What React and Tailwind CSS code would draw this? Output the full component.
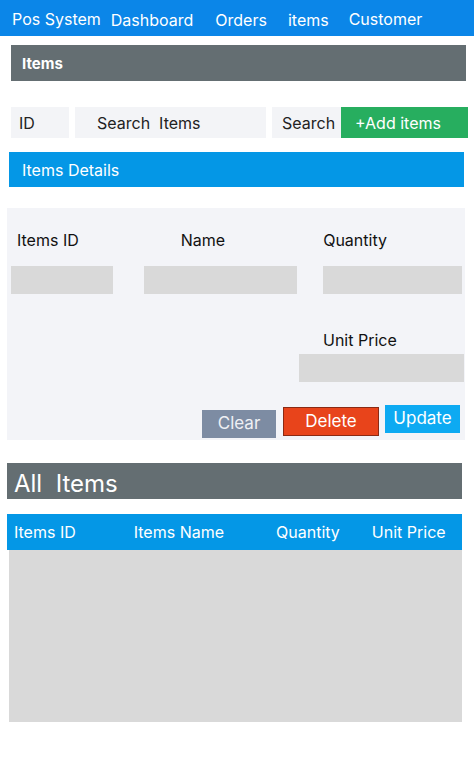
const font = { fontFamily: "Inter, 'Noto Sans', sans-serif" };

const Field = ({ className }) => (
  <div className={"h-[28px] bg-[#d9d9d9] " + className}></div>
);

const App = () => {
  return (
    <div className="w-[474px] h-[757px] bg-white text-black" style={font}>
      {/* nav */}
      <div className="h-[36px] bg-[#0b86e8] flex items-center pt-[3px] text-white text-[16px]">
        <span className="ml-[12px] -mt-[2px]">Pos System</span>
        <span className="ml-[10px]">Dashboard</span>
        <span className="ml-[22px]">Orders</span>
        <span className="ml-[21px]">items</span>
        <span className="ml-[20px] -mt-[2px]">Customer</span>
      </div>

      {/* items title */}
      <div className="mt-[9px] mx-[11px] w-[455px] h-[36px] bg-[#646e72] flex items-center pt-[3px] px-[11px] text-white font-bold text-[15px]">
        Items
      </div>

      {/* search row */}
      <div className="mt-[26px] ml-[11px] flex h-[31px] text-[16px] text-[#222]">
        <div className="w-[58px] bg-[#f3f4f7] flex items-center pl-[8px]">ID</div>
        <div className="ml-[6px] w-[191px] bg-[#f3f4f7] flex items-center pl-[22px]">Search&nbsp; Items</div>
        <div className="ml-[6px] w-[69px] bg-[#f3f4f7] flex items-center pl-[10px]">Search</div>
        <div className="w-[127px] bg-[#27ae5f] flex items-center pl-[14px] text-white">+Add items</div>
      </div>

      {/* items details bar */}
      <div className="mt-[14px] ml-[9px] w-[455px] h-[35px] bg-[#0497e6] flex items-center pl-[13px] text-white text-[16px]">
        Items Details
      </div>

      {/* form */}
      <div className="mt-[21px] ml-[7px] w-[458px] h-[232px] bg-[#f3f4f8] flex flex-col text-[16px] text-[#111]">
        <div className="flex mt-[22px] h-[20px] items-center">
          <span className="ml-[10px]">Items ID</span>
          <span className="ml-[102px]">Name</span>
          <span className="ml-[98px]">Quantity</span>
        </div>
        <div className="flex mt-[16px]">
          <Field className="ml-[4px] w-[102px]" />
          <Field className="ml-[31px] w-[153px]" />
          <Field className="ml-[26px] w-[139px]" />
        </div>
        <div className="mt-[36px] ml-[316px] h-[20px] flex items-center">Unit Price</div>
        <Field className="mt-[4px] ml-[292px] w-[165px]" />
        <div className="flex items-start mt-[23px] text-[17px]">
          <div className="ml-[195px] mt-[5px] w-[74px] h-[28px] bg-[#7d8ca3] text-[#eef0f4] flex items-center justify-center">Clear</div>
          <div className="ml-[7px] mt-[2px] w-[96px] h-[29px] bg-[#e8441b] border border-[#8a2a14] text-white flex items-center justify-center">Delete</div>
          <div className="ml-[6px] w-[75px] h-[28px] bg-[#0daaf2] text-white flex items-center justify-center">Update</div>
        </div>
      </div>

      {/* all items */}
      <div className="mt-[23px] ml-[7px] w-[455px] h-[36px] bg-[#646e72] flex items-center pt-[5px] pl-[7px] text-white text-[24px]">
        All&nbsp; Items
      </div>

      <div className="mt-[15px] ml-[7px] w-[455px] h-[36px] bg-[#0497e6] flex items-center text-white text-[16px]">
        <span className="ml-[7px]">Items ID</span>
        <span className="ml-[58px]">Items Name</span>
        <span className="ml-[52px]">Quantity</span>
        <span className="ml-[32px]">Unit Price</span>
      </div>
      <div className="ml-[9px] w-[453px] h-[172px] bg-[#d9d9d9]"></div>
    </div>
  );
};

export default App;
